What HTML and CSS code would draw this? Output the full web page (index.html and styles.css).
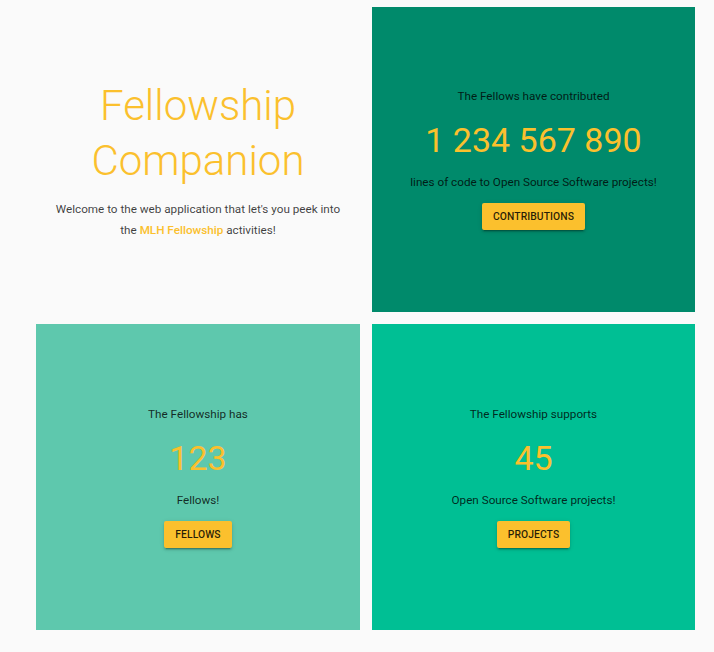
FILE: index.html
```html
<!DOCTYPE html>
<html lang="en">
<head>
<meta charset="utf-8">
<title>Fellowship Companion</title>
<link rel="stylesheet" href="styles.css">
</head>
<body>
<main class="grid">
  <section class="cell intro">
    <h1 class="title">Fellowship<br>Companion</h1>
    <p class="welcome">Welcome to the web application that let's you peek into the <span class="hl">MLH Fellowship</span> activities!</p>
  </section>
  <section class="cell card card-dark">
    <p class="line">The Fellows have contributed</p>
    <p class="num">1 234 567 890</p>
    <p class="line">lines of code to Open Source Software projects!</p>
    <button class="btn">Contributions</button>
  </section>
  <section class="cell card card-light">
    <p class="line">The Fellowship has</p>
    <p class="num">123</p>
    <p class="line">Fellows!</p>
    <button class="btn">Fellows</button>
  </section>
  <section class="cell card card-mid">
    <p class="line">The Fellowship supports</p>
    <p class="num">45</p>
    <p class="line">Open Source Software projects!</p>
    <button class="btn">Projects</button>
  </section>
</main>
</body>
</html>
```
FILE: styles.css
```css
html, body {
  margin: 0;
  padding: 0;
  background: #fafafa;
  font-family: Roboto, "Liberation Sans", sans-serif;
}
.grid {
  display: grid;
  grid-template-columns: 324px 323px;
  grid-template-rows: 305px 306px;
  gap: 12px;
  padding: 7px 0 0 36px;
}
.cell {
  display: flex;
  flex-direction: column;
  align-items: center;
  justify-content: center;
  text-align: center;
}
.title {
  margin: 0;
  font-weight: 300;
  font-size: 42px;
  line-height: 55px;
  color: #fbc02d;
}
.welcome {
  margin: 11px 0 0;
  font-size: 11.7px;
  line-height: 21px;
  color: rgba(0, 0, 0, 0.76);
  padding: 0 12px;
}
.hl {
  color: #fbc02d;
  font-weight: 500;
}
.card {
  padding-bottom: 3px;
}
.card-dark { background: #008a6b; }
.card-light { background: #5ec8ad; }
.card-mid { background: #00bf94; }
.line {
  margin: 0;
  font-size: 11.7px;
  line-height: 20px;
  color: rgba(0, 0, 0, 0.8);
}
.num {
  margin: 12px 0 10px;
  font-size: 34px;
  line-height: 44px;
  font-weight: 400;
  color: #fbc02d;
}
.btn {
  margin-top: 11px;
  height: 27px;
  padding: 0 11px;
  border: none;
  border-radius: 2px;
  background: #fbc02d;
  color: rgba(0, 0, 0, 0.85);
  font-family: Roboto, "Liberation Sans", sans-serif;
  font-size: 10.3px;
  font-weight: 500;
  letter-spacing: 0.01em;
  text-transform: uppercase;
  box-shadow: 0 3px 1px -2px rgba(0,0,0,.2), 0 2px 2px 0 rgba(0,0,0,.14), 0 1px 5px 0 rgba(0,0,0,.12);
}
```
